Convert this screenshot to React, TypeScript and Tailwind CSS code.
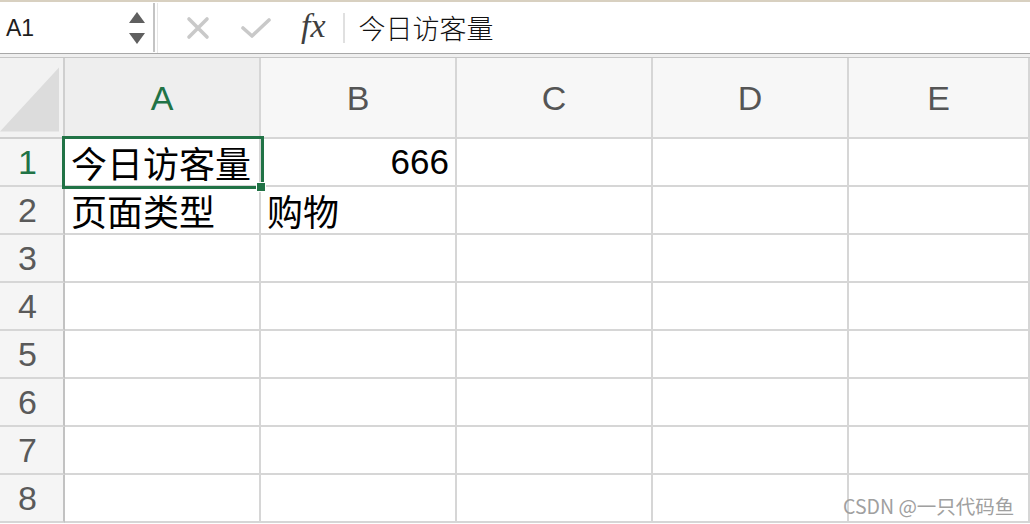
import React from "react";

const cols = ["A", "B", "C", "D", "E"];
const rows = [1, 2, 3, 4, 5, 6, 7, 8];

const data: Record<string, { v: string; right?: boolean }> = {
  A1: { v: "今日访客量" },
  B1: { v: "666", right: true },
  A2: { v: "页面类型" },
  B2: { v: "购物" },
};

const sans = "font-['Liberation_Sans','Noto_Sans_CJK_SC',sans-serif]";
const cjk = "font-['Noto_Sans_CJK_SC','Liberation_Sans',sans-serif]";

export default function App() {
  return (
    <div className={`w-[1030px] h-[524px] overflow-hidden bg-white ${sans} relative`}>
      {/* Formula bar */}
      <div className="h-[53px] border-t-2 border-[#d8d0c0] flex items-stretch bg-white">
        <div className="w-[153px] flex items-center justify-between pl-[6px] pr-[8px]">
          <span className="text-[23px] text-[#1e1e1e] leading-none mt-[2px]">A1</span>
          <div className="flex flex-col gap-[10px] items-center">
            <svg width="16" height="11" viewBox="0 0 16 11"><polygon points="8,0 16,11 0,11" fill="#5f5f5f" /></svg>
            <svg width="16" height="11" viewBox="0 0 16 11"><polygon points="0,0 16,0 8,11" fill="#5f5f5f" /></svg>
          </div>
        </div>
        <div className="w-[2px] bg-[#c4c4c4] mt-[1px] mb-[1px]" />
        <div className="w-[2px] bg-white" />
        <div className="w-[1px] bg-[#e6e6e6] mt-[1px]" />
        <div className="flex items-center flex-1">
          <div className="w-[28px]" />
          <svg width="24" height="24" viewBox="0 0 24 24" className="mt-[1px]">
            <path d="M3 3 L21 21 M21 3 L3 21" stroke="#c9c9c9" strokeWidth="3.6" strokeLinecap="round" />
          </svg>
          <div className="w-[31px]" />
          <svg width="30" height="24" viewBox="0 0 30 24" className="mt-[1px]">
            <path d="M2 12 L11 20 L28 4" stroke="#c9c9c9" strokeWidth="3.6" fill="none" strokeLinecap="round" strokeLinejoin="round" />
          </svg>
          <div className="w-[30px]" />
          <span className="font-['Liberation_Serif','DejaVu_Serif',serif] italic text-[34px] text-[#3f3f3f] leading-none mb-[3px]">fx</span>
          <div className="w-[17px]" />
          <div className="w-[2px] h-[30px] bg-[#e0e0e0]" />
          <span className={`${cjk} ml-[14px] text-[27px] text-[#111] font-light leading-none`}>今日访客量</span>
        </div>
      </div>
      <div className="h-[1px] bg-[#a8a8a8]" />
      <div className="h-[3px] bg-[#efefef]" />
      <div className="h-[1px] bg-[#c6c6c6]" />

      {/* Grid */}
      <div className="grid grid-cols-[65px_196px_196px_196px_196px_1fr] grid-rows-[81px_repeat(8,48px)]">
        {/* corner */}
        <div className="bg-[#f2f2f2] border-r-2 border-b-2 border-[#cfcfcf] flex items-end pb-[5px] pr-[4px]">
          <svg width="60" height="65" viewBox="0 0 60 65"><polygon points="0,65 60,0 60,65" fill="#dcdcdc" /></svg>
        </div>
        {cols.map((c) => (
          <div
            key={c}
            className={`relative border-r-2 border-b-2 border-[#d6d6d6] flex items-center justify-center text-[34px] ${
              c === "A" ? "bg-[#eeeeee] text-[#217346]" : "bg-[#f7f7f7] text-[#555555]"
            }`}
          >
            <span className="mt-[2px]">{c}</span>
            {c === "A" && <div className="absolute left-0 right-[-2px] bottom-[-2px] h-[3px] bg-[#217346]" />}
          </div>
        ))}
        {rows.map((r) => (
          <React.Fragment key={r}>
            <div
              className={`bg-[#f5f5f5] border-r-2 border-r-[#c2c2c2] border-b-2 border-b-[#d6d6d6] flex items-center justify-center pr-[8px] text-[34px] ${
                r === 1 ? "text-[#217346]" : "text-[#5a5a5a]"
              }`}
            >
              {r}
            </div>
            {cols.map((c) => {
              const d = data[`${c}${r}`];
              return (
                <div
                  key={c}
                  className={`border-r-2 border-b-2 border-[#d6d6d6] flex items-end overflow-visible whitespace-nowrap ${
                    d?.right ? "justify-end pr-[6px]" : "justify-start pl-[6px]"
                  } ${cjk} text-[36px] text-black leading-[46px]`}
                >
                  {d?.right ? <span className={`${sans} text-[35px]`}>{d.v}</span> : d?.v}
                </div>
              );
            })}
          </React.Fragment>
        ))}
      </div>

      {/* selection */}
      <div className="absolute left-[62px] top-[136px] w-[202px] h-[53px] border-[3px] border-[#217346] pointer-events-none" />
      <div className="absolute left-[256px] top-[182px] w-[10px] h-[10px] bg-[#217346] border border-white" />

      {/* watermark */}
      <div className={`absolute left-[843px] top-[491px] text-[19.5px] text-[#a0a0a0] ${cjk}`}>CSDN @一只代码鱼</div>
    </div>
  );
}
